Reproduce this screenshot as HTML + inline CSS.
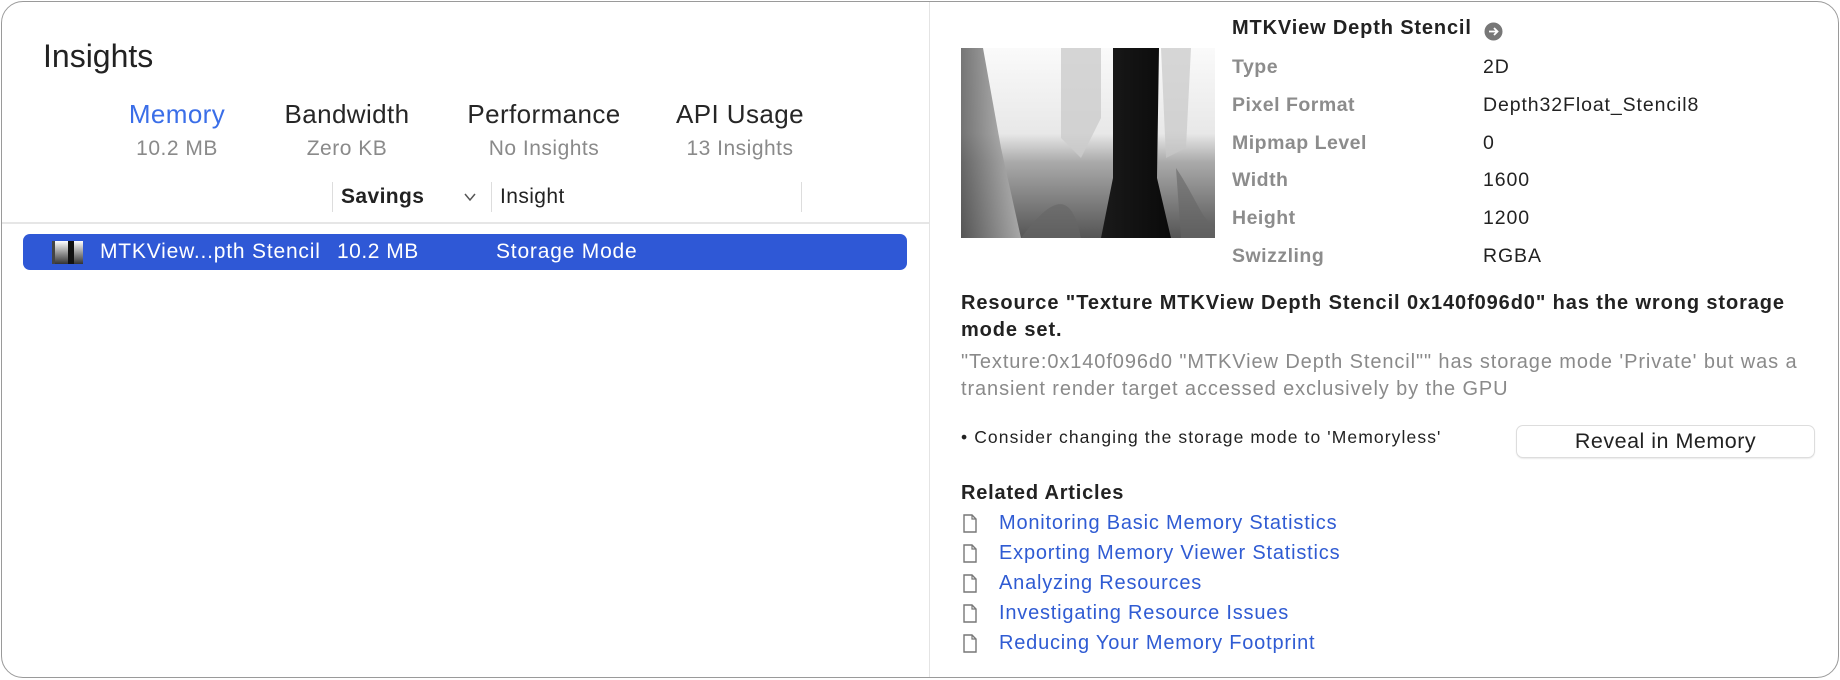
<!DOCTYPE html>
<html><head><meta charset="utf-8"><style>
*{margin:0;padding:0;box-sizing:border-box}
body{width:1840px;height:680px;background:#fff;font-family:"Liberation Sans",sans-serif;position:relative;overflow:hidden;color:#222}
.frame{position:absolute;left:1px;top:1px;width:1838px;height:677px;border:1.5px solid #9a9a9a;border-radius:22px}
.a{position:absolute;white-space:nowrap}
.tab{position:absolute;text-align:center;width:220px;font-size:26px;letter-spacing:0.4px;color:#262626}
.sub{position:absolute;text-align:center;width:220px;font-size:21px;letter-spacing:0.5px;color:#8a8a8a}
.lbl{position:absolute;left:1232px;font-size:19.5px;letter-spacing:0.5px;font-weight:bold;color:#8c8c8c}
.val{position:absolute;left:1483px;font-size:19.5px;letter-spacing:0.9px;color:#222}
.link{position:absolute;left:999px;font-size:20px;letter-spacing:0.8px;color:#2f5bd3}
.doc{position:absolute;left:963px}
</style></head><body>
<div class="frame"></div>
<div class="a" style="left:929px;top:2px;width:1px;height:675px;background:#e4e4e4"></div>

<div class="a" style="left:43px;top:38px;font-size:32px;color:#222">Insights</div>
<div class="tab" style="left:67px;top:99px;color:#3a6ee8">Memory</div>
<div class="tab" style="left:237px;top:99px">Bandwidth</div>
<div class="tab" style="left:434px;top:99px">Performance</div>
<div class="tab" style="left:630px;top:99px">API Usage</div>
<div class="sub" style="left:67px;top:137px">10.2 MB</div>
<div class="sub" style="left:237px;top:137px">Zero KB</div>
<div class="sub" style="left:434px;top:137px">No Insights</div>
<div class="sub" style="left:630px;top:137px">13 Insights</div>

<div class="a" style="left:332px;top:182px;width:1px;height:30px;background:#ddd"></div>
<div class="a" style="left:491px;top:182px;width:1px;height:30px;background:#ddd"></div>
<div class="a" style="left:801px;top:182px;width:1px;height:30px;background:#ddd"></div>
<div class="a" style="left:341px;top:185px;font-size:21px;letter-spacing:0.4px;font-weight:bold">Savings</div>
<svg class="a" style="left:463px;top:192px" width="14" height="10"><path d="M2 2L7 8L12 2" fill="none" stroke="#555" stroke-width="1.5"/></svg>
<div class="a" style="left:500px;top:185px;font-size:21px;letter-spacing:0.4px">Insight</div>
<div class="a" style="left:2px;top:222px;width:927px;height:2px;background:#e6e6e6"></div>

<div class="a" style="left:23px;top:234px;width:884px;height:36px;background:#2f58d6;border-radius:7px"></div>
<svg class="a" style="left:52px;top:241px" width="31" height="23">
<defs><linearGradient id="ig" x1="0" y1="0" x2="0" y2="1"><stop offset="0" stop-color="#fff"/><stop offset="1" stop-color="#333"/></linearGradient></defs>
<rect width="31" height="23" fill="url(#ig)"/><rect x="16" y="0" width="6" height="23" fill="#111"/><rect x="0" y="0" width="3" height="23" fill="#444"/></svg>
<div class="a" style="left:100px;top:240px;font-size:21px;letter-spacing:0.8px;color:#fff">MTKView...pth Stencil</div>
<div class="a" style="left:337px;top:240px;font-size:21px;letter-spacing:0.5px;color:#fff">10.2 MB</div>
<div class="a" style="left:496px;top:240px;font-size:21px;letter-spacing:0.8px;color:#fff">Storage Mode</div>

<div class="a" style="left:1232px;top:17px;font-size:20px;letter-spacing:0.85px;font-weight:bold;color:#222">MTKView Depth Stencil</div>
<svg class="a" style="left:1484px;top:22px" width="19" height="19"><circle cx="9.5" cy="9.5" r="9" fill="#777"/><path d="M5 9.5H13M10 6L13.5 9.5L10 13" fill="none" stroke="#fff" stroke-width="1.8"/></svg>

<svg class="a" style="left:961px;top:48px" width="254" height="190">
<defs>
<linearGradient id="bg" x1="0" y1="0" x2="0" y2="1"><stop offset="0" stop-color="#fafafa"/><stop offset="0.45" stop-color="#e8e8e8"/><stop offset="0.6" stop-color="#aaa"/><stop offset="1" stop-color="#555"/></linearGradient>
<linearGradient id="tr" x1="0" y1="0" x2="1" y2="0"><stop offset="0" stop-color="#1a1a1a"/><stop offset="1" stop-color="#0a0a0a"/></linearGradient>
<linearGradient id="lt" x1="0" y1="0" x2="1" y2="0"><stop offset="0" stop-color="#555"/><stop offset="1" stop-color="#bbb"/></linearGradient>
</defs>
<rect width="254" height="190" fill="url(#bg)"/>
<path d="M0 0H22L40 100L60 190H0Z" fill="url(#lt)" opacity="0.8"/>
<path d="M100 0H140V70L120 110L100 90Z" fill="#ccc" opacity="0.8"/>
<path d="M200 0H230L225 100L205 110Z" fill="#c8c8c8" opacity="0.7"/>
<path d="M152 0H198L196 130L210 190H140L152 130Z" fill="url(#tr)"/>
<path d="M60 190C90 150 110 140 120 190Z M215 120C235 150 240 170 254 180V190H220Z" fill="#666" opacity="0.6"/>
</svg>

<div class="lbl" style="top:56px">Type</div><div class="val" style="top:56px">2D</div>
<div class="lbl" style="top:94px">Pixel Format</div><div class="val" style="top:94px">Depth32Float_Stencil8</div>
<div class="lbl" style="top:132px">Mipmap Level</div><div class="val" style="top:132px">0</div>
<div class="lbl" style="top:169px">Width</div><div class="val" style="top:169px">1600</div>
<div class="lbl" style="top:207px">Height</div><div class="val" style="top:207px">1200</div>
<div class="lbl" style="top:245px">Swizzling</div><div class="val" style="top:245px">RGBA</div>

<div class="a" style="left:961px;top:290px;font-size:20px;letter-spacing:0.9px;font-weight:bold;line-height:27px;color:#222">Resource "Texture MTKView Depth Stencil 0x140f096d0" has the wrong storage<br>mode set.</div>
<div class="a" style="left:961px;top:349px;font-size:20px;letter-spacing:0.9px;line-height:27px;color:#8a8a8a">"Texture:0x140f096d0 "MTKView Depth Stencil"" has storage mode 'Private' but was a<br>transient render target accessed exclusively by the GPU</div>
<div class="a" style="left:961px;top:427px;font-size:17.5px;letter-spacing:1.1px;color:#222">• Consider changing the storage mode to 'Memoryless'</div>
<div class="a" style="left:1517px;top:426px;width:297px;height:31px;border-radius:6px;background:#fff;box-shadow:0 0 0 1px #ddd,0 1px 2px rgba(0,0,0,.2);text-align:center;font-size:21.5px;letter-spacing:0.5px;line-height:31px;color:#222">Reveal in Memory</div>

<div class="a" style="left:961px;top:482px;font-size:20px;letter-spacing:0.8px;font-weight:bold;color:#222">Related Articles</div>
<svg class="doc" style="top:514px" width="14" height="19"><path d="M1 1H9L13 5V18H1Z" fill="none" stroke="#777" stroke-width="1.4"/><path d="M9 1V5H13" fill="none" stroke="#777" stroke-width="1.2"/></svg>
<svg class="doc" style="top:544px" width="14" height="19"><path d="M1 1H9L13 5V18H1Z" fill="none" stroke="#777" stroke-width="1.4"/><path d="M9 1V5H13" fill="none" stroke="#777" stroke-width="1.2"/></svg>
<svg class="doc" style="top:574px" width="14" height="19"><path d="M1 1H9L13 5V18H1Z" fill="none" stroke="#777" stroke-width="1.4"/><path d="M9 1V5H13" fill="none" stroke="#777" stroke-width="1.2"/></svg>
<svg class="doc" style="top:604px" width="14" height="19"><path d="M1 1H9L13 5V18H1Z" fill="none" stroke="#777" stroke-width="1.4"/><path d="M9 1V5H13" fill="none" stroke="#777" stroke-width="1.2"/></svg>
<svg class="doc" style="top:634px" width="14" height="19"><path d="M1 1H9L13 5V18H1Z" fill="none" stroke="#777" stroke-width="1.4"/><path d="M9 1V5H13" fill="none" stroke="#777" stroke-width="1.2"/></svg>
<div class="link" style="top:512px">Monitoring Basic Memory Statistics</div>
<div class="link" style="top:542px">Exporting Memory Viewer Statistics</div>
<div class="link" style="top:572px">Analyzing Resources</div>
<div class="link" style="top:602px">Investigating Resource Issues</div>
<div class="link" style="top:632px">Reducing Your Memory Footprint</div>
</body></html>
